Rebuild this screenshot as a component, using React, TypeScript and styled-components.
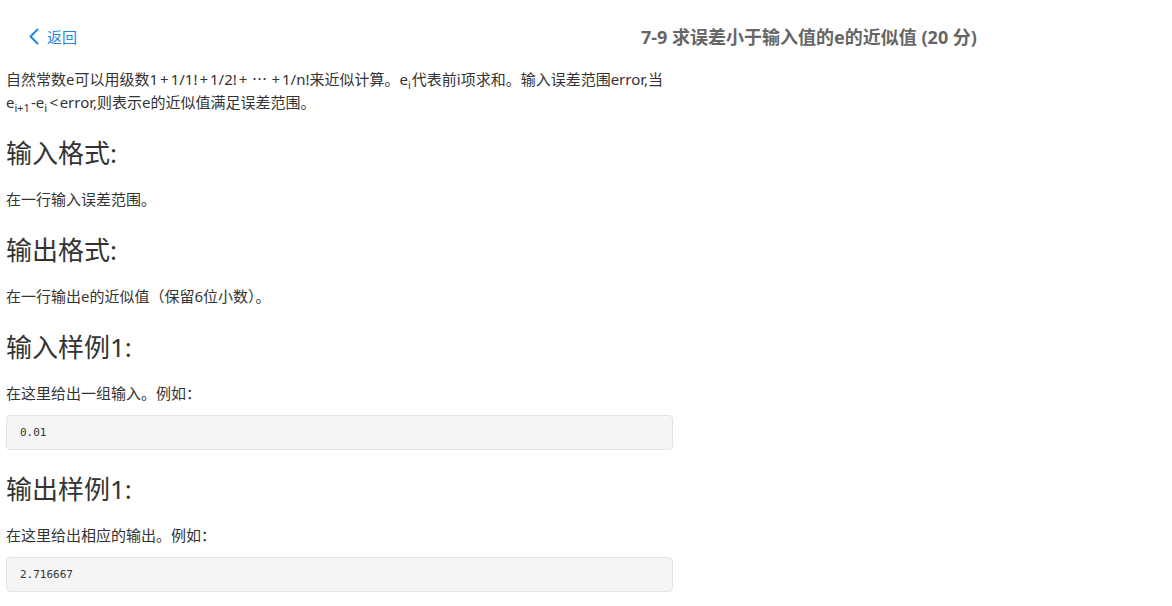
import React from "react";
import styled, { createGlobalStyle } from "styled-components";

const GlobalStyle = createGlobalStyle`
  html, body {
    margin: 0;
    padding: 0;
    background: #fff;
  }
  body {
    font-family: "Noto Sans", "Noto Sans CJK SC", sans-serif;
    color: #333;
  }
`;

const Header = styled.header`
  display: flex;
  align-items: center;
  height: 68px;
  padding-top: 4px;
  box-sizing: border-box;
`;

const BackArea = styled.div`
  width: 446px;
  padding-left: 28px;
  box-sizing: border-box;
  display: flex;
  align-items: center;
`;

const BackLink = styled.a`
  display: inline-flex;
  align-items: center;
  gap: 7px;
  color: #1f86e4;
  font-size: 15px;
  text-decoration: none;
  cursor: pointer;
`;

const Title = styled.h1`
  flex: 1;
  margin: 0;
  text-align: center;
  font-size: 18px;
  font-weight: 700;
  color: #666;
`;

const Content = styled.main`
  width: 667px;
  padding-left: 6px;
`;

const Para = styled.p<{ $wide?: boolean }>`
  margin: 0;
  font-size: 15px;
  line-height: 23px;
  width: ${(p) => (p.$wide ? "690px" : "auto")};
`;

const Heading = styled.h3`
  margin: 25px 0 21px;
  font-size: 26px;
  line-height: 28px;
  font-weight: 400;
  color: #333;
`;

const Sub = styled.sub`
  font-size: 11px;
  line-height: 0;
  vertical-align: -4px;
  padding-right: 1px;
`;

const Op = styled.span<{ $space?: number }>`
  padding: 0 ${(p) => p.$space ?? 2}px;
`;

const Dots = styled.span`
  display: inline-block;
  width: 20px;
  text-align: center;
`;

const Code = styled.pre`
  margin: 10px 0 25px;
  padding: 8px 13px;
  background: #f5f5f5;
  border: 1px solid #e4e4e4;
  border-radius: 4px;
  font-family: "DejaVu Sans Mono", "Liberation Mono", monospace;
  font-size: 11px;
  line-height: 17px;
  color: #333;
`;

function ChevronLeft() {
  return (
    <svg width="12" height="17" viewBox="0 0 12 17">
      <polyline
        points="9.5,1.5 2.5,8.5 9.5,15.5"
        fill="none"
        stroke="#1f86e4"
        strokeWidth="2"
        strokeLinecap="round"
        strokeLinejoin="round"
      />
    </svg>
  );
}

export default function App() {
  return (
    <>
      <GlobalStyle />
      <Header>
        <BackArea>
          <BackLink>
            <ChevronLeft />
            返回
          </BackLink>
        </BackArea>
        <Title>7-9 求误差小于输入值的e的近似值 (20 分)</Title>
      </Header>
      <Content>
        <Para $wide>
          自然常数e可以用级数1<Op>+</Op>1/1!<Op>+</Op>1/2!<Op>+</Op>
          <Dots>⋯</Dots>
          <Op>+</Op>1/n!来近似计算。e<Sub>i</Sub>代表前i项求和。输入误差范围error,当
          <br />e<Sub>i+1</Sub>-e<Sub>i</Sub>
          <Op $space={1.5}>&lt;</Op>error,则表示e的近似值满足误差范围。
        </Para>
        <Heading>输入格式:</Heading>
        <Para>在一行输入误差范围。</Para>
        <Heading>输出格式:</Heading>
        <Para>在一行输出e的近似值（保留6位小数）。</Para>
        <Heading>输入样例1:</Heading>
        <Para>在这里给出一组输入。例如：</Para>
        <Code>0.01</Code>
        <Heading>输出样例1:</Heading>
        <Para>在这里给出相应的输出。例如：</Para>
        <Code>2.716667</Code>
      </Content>
    </>
  );
}
